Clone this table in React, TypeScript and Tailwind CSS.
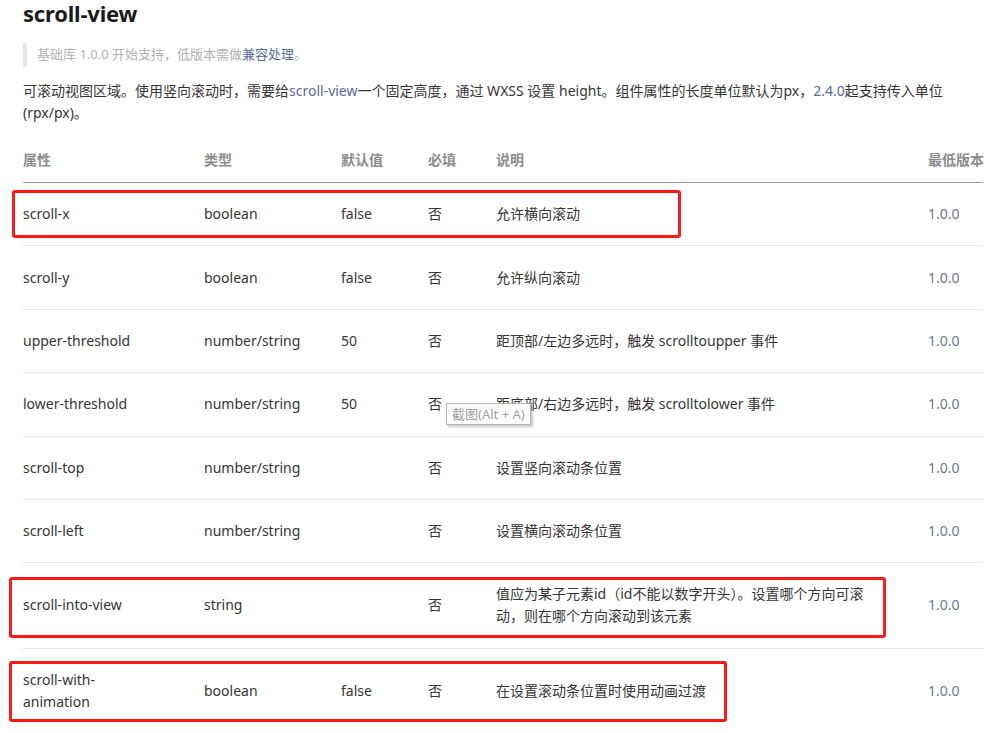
import React from "react";

const rows: { name: React.ReactNode; type: string; def: string; req: string; desc: React.ReactNode; ver: string }[] = [
  { name: "scroll-x", type: "boolean", def: "false", req: "否", desc: "允许横向滚动", ver: "1.0.0" },
  { name: "scroll-y", type: "boolean", def: "false", req: "否", desc: "允许纵向滚动", ver: "1.0.0" },
  { name: "upper-threshold", type: "number/string", def: "50", req: "否", desc: "距顶部/左边多远时，触发 scrolltoupper 事件", ver: "1.0.0" },
  { name: "lower-threshold", type: "number/string", def: "50", req: "否", desc: "距底部/右边多远时，触发 scrolltolower 事件", ver: "1.0.0" },
  { name: "scroll-top", type: "number/string", def: "", req: "否", desc: "设置竖向滚动条位置", ver: "1.0.0" },
  { name: "scroll-left", type: "number/string", def: "", req: "否", desc: "设置横向滚动条位置", ver: "1.0.0" },
  { name: "scroll-into-view", type: "string", def: "", req: "否", desc: "值应为某子元素id（id不能以数字开头）。设置哪个方向可滚动，则在哪个方向滚动到该元素", ver: "1.0.0" },
  { name: "scroll-with-animation", type: "boolean", def: "false", req: "否", desc: "在设置滚动条位置时使用动画过渡", ver: "1.0.0" },
];

export default function App() {
  return (
    <div
      className="relative w-[989px] h-[733px] overflow-hidden bg-white text-[#353535]"
      style={{ fontFamily: '"Noto Sans", "Noto Sans CJK SC", sans-serif' }}
    >
      <div className="pl-[23px] pr-[6px]">
        <h1 className="text-[22px] font-bold leading-[26px] text-[#1a1a1a] tracking-[-0.2px]">scroll-view</h1>
        <div className="mt-[17px] border-l-[4px] border-[#e6e6e6] pl-[10px] h-[24px] flex items-center text-[13px] text-[#b2b2b2]">
          基础库 1.0.0 开始支持，低版本需做<span className="text-[#576b95]">兼容处理</span>。
        </div>
        <p className="mt-[13px] text-[14px] leading-[22px] text-[#353535]">
          可滚动视图区域。使用竖向滚动时，需要给<span className="text-[#576b95]">scroll-view</span>一个固定高度，通过 WXSS 设置 height。组件属性的长度单位默认为px，<span className="text-[#576b95]">2.4.0</span>起支持传入单位(rpx/px)。
        </p>
        <div className="mt-[14px] text-[14px] leading-[22px]">
          <div className="flex border-b border-[#999] py-[11px] text-[#8c8c8c] font-bold whitespace-nowrap">
            <div className="w-[181px] shrink-0">属性</div>
            <div className="w-[137px] shrink-0">类型</div>
            <div className="w-[87px] shrink-0">默认值</div>
            <div className="w-[68px] shrink-0">必填</div>
            <div className="w-[432px] shrink-0">说明</div>
            <div className="flex-1">最低版本</div>
          </div>
          {rows.map((r, i) => (
            <div key={i} className="flex items-center border-b border-[#e5e5e5] py-[20.2px]">
              <div className="w-[181px] shrink-0">
                <div className="w-[130px] break-words">{r.name}</div>
              </div>
              <div className="w-[137px] shrink-0">{r.type}</div>
              <div className="w-[87px] shrink-0">{r.def}</div>
              <div className="w-[68px] shrink-0">{r.req}</div>
              <div className="w-[432px] shrink-0">
                <div className="w-[374px]">{r.desc}</div>
              </div>
              <div className="flex-1 whitespace-nowrap text-[#6b7894]">{r.ver}</div>
            </div>
          ))}
        </div>
      </div>

      {/* red annotation boxes */}
      <div className="absolute left-[12px] top-[190px] w-[669px] h-[48px] border-[3px] border-[#ff1a1a] rounded-[3px]" />
      <div className="absolute left-[9px] top-[577px] w-[877px] h-[61px] border-[3px] border-[#ff1a1a] rounded-[3px]" />
      <div className="absolute left-[9px] top-[661px] w-[718px] h-[61px] border-[3px] border-[#ff1a1a] rounded-[3px]" />

      {/* screenshot tooltip */}
      <div className="absolute left-[446px] top-[403px] h-[22px] px-[5px] flex items-center bg-white border border-[#b5b5b5] shadow-[2px_2px_2px_rgba(0,0,0,0.2)] text-[13px] text-[#a0a0a0] leading-none">
        截图(Alt + A)
      </div>
    </div>
  );
}
